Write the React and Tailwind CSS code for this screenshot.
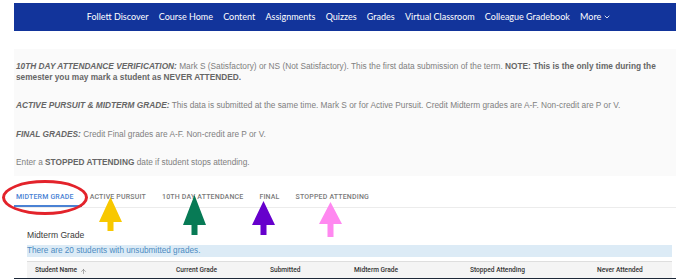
import React from 'react';
import { ChevronDown, ArrowUp } from 'lucide-react';

const navItems = [
  'Follett Discover',
  'Course Home',
  'Content',
  'Assignments',
  'Quizzes',
  'Grades',
  'Virtual Classroom',
  'Colleague Gradebook',
];

const tabs = ['Midterm Grade', 'Active Pursuit', '10th Day Attendance', 'Final', 'Stopped Attending'];

const columns = ['Current Grade', 'Submitted', 'Midterm Grade', 'Stopped Attending', 'Never Attended'];

// annotation arrow pointing up at a tab
function Arrow({ className, color, headH, shaftH }) {
  const w = 23;
  const h = headH + shaftH;
  return (
    <svg className={className} width={w} height={h} viewBox={`0 0 ${w} ${h}`}>
      <polygon
        points={`11.5,0 ${w},${headH} 14.5,${headH} 14.5,${h} 8.5,${h} 8.5,${headH} 0,${headH}`}
        fill={color}
      />
    </svg>
  );
}

export default function App() {
  return (
    <div className="relative w-[676px] h-[279px] overflow-hidden bg-white pt-[3px] pl-[14px] font-['Liberation_Sans',Arial,sans-serif]">
      {/* Top nav */}
      <nav className="h-[28px] bg-[#12349b] flex items-center justify-center gap-[10.2px] pl-[8px] font-['Lato',sans-serif] text-[9px] text-white">
        {navItems.map((item) => (
          <span key={item}>{item}</span>
        ))}
        <span className="flex items-center gap-[2px]">
          More <ChevronDown className="w-[8px] h-[8px]" strokeWidth={2.5} />
        </span>
      </nav>

      {/* Instructions */}
      <div className="mt-[18px] bg-[#fafafa] pt-[12px] pb-[8px] pl-[2px] pr-[8px] text-[8.3px] leading-[11px] text-[#808080]">
        <p>
          <b className="italic text-[#666]">10TH DAY ATTENDANCE VERIFICATION:</b> Mark S (Satisfactory) or NS (Not
          Satisfactory). This the first data submission of the term.{' '}
          <b className="text-[#666]">NOTE: This is the only time during the semester you may mark a student as NEVER ATTENDED.</b>
        </p>
        <p className="mt-[17px]">
          <b className="italic text-[#666]">ACTIVE PURSUIT &amp; MIDTERM GRADE:</b> This data is submitted at the same time.
          Mark S or for Active Pursuit. Credit Midterm grades are A-F. Non-credit are P or V.
        </p>
        <p className="mt-[18px]">
          <b className="italic text-[#666]">FINAL GRADES:</b> Credit Final grades are A-F. Non-credit are P or V.
        </p>
        <p className="mt-[17px]">
          Enter a <b className="text-[#666]">STOPPED ATTENDING</b> date if student stops attending.
        </p>
      </div>

      {/* Tabs */}
      <div className="h-[32px] flex items-end border-b border-[#ececec] font-['Roboto',sans-serif] text-[7px] font-medium tracking-[0.025em] uppercase text-[#7a7a7a]">
        {tabs.map((t, i) => (
          <div
            key={t}
            className={
              i === 0
                ? 'pl-[2px] pr-[8px] pb-[3px] border-b-2 border-[#4a82d4] text-[#4a82d4]'
                : 'px-[8px] pb-[5px]'
            }
          >
            {t}
          </div>
        ))}
      </div>

      {/* Grade panel */}
      <div className="pl-[13px] pr-[4px]">
        <div className="mt-[21px] text-[8.6px] leading-[12px] text-[#3a3a3a]">Midterm Grade</div>
        <div className="mt-[4px] h-[12px] flex items-center bg-[#dcebf6] text-[8.2px] text-[#4d8cc2]">
          There are 20 students with unsubmitted grades.
        </div>
        <div className="mt-[4px] h-[17px] grid grid-cols-[141px_94px_84px_116px_127px_1fr] items-end pb-[2px] pl-[8px] bg-[#f4f4f4] border-t border-[#dedede] font-['Roboto',sans-serif] text-[6.6px] font-medium text-[#333]">
          <span className="flex items-center gap-[3px]">
            Student Name <ArrowUp className="w-[7px] h-[7px] text-[#777]" strokeWidth={2} />
          </span>
          {columns.map((c) => (
            <span key={c}>{c}</span>
          ))}
        </div>
      </div>
      <div className="h-[3px] bg-[#1d2838]" />

      {/* Annotations */}
      <div className="absolute left-[2px] top-[180px] w-[86px] h-[35px] rounded-[50%] border-[3px] border-[#e3232b]" />
      <Arrow className="absolute left-[99px] top-[197px]" color="#f8c800" headH={25} shaftH={9} />
      <Arrow className="absolute left-[183px] top-[195px]" color="#077a55" headH={30} shaftH={10} />
      <Arrow className="absolute left-[252px] top-[201px]" color="#6600cc" headH={24} shaftH={10} />
      <Arrow className="absolute left-[319px] top-[202px]" color="#ff88f0" headH={22} shaftH={13} />
    </div>
  );
}
